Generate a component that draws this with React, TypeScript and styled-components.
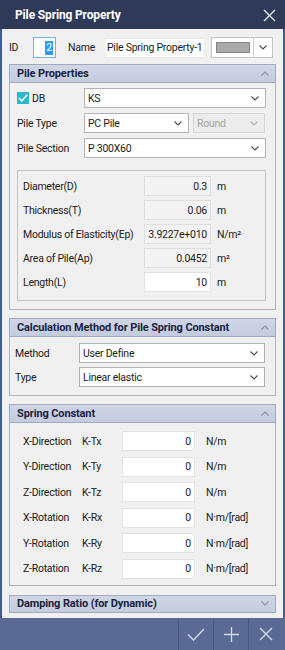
import styled, { createGlobalStyle } from "styled-components";

const GlobalStyle = createGlobalStyle`
  html, body {
    margin: 0;
    padding: 0;
    background: #ffffff;
  }
  body {
    font-family: Roboto, "Liberation Sans", sans-serif;
    font-size: 10.5px;
    letter-spacing: -0.25px;
    color: #1b1b1b;
  }
  * {
    box-sizing: border-box;
  }
`;

const Window = styled.div`
  width: 285px;
  height: 650px;
  display: flex;
  flex-direction: column;
  background: #f0f0f0;
`;

const TitleBar = styled.div`
  height: 29px;
  flex-shrink: 0;
  display: flex;
  align-items: center;
  justify-content: space-between;
  padding: 1px 9px 0 15px;
  background: #2e3a58;
  color: #ffffff;
  font-weight: 700;
  font-size: 12px;
  letter-spacing: -0.15px;
`;

const Body = styled.div`
  flex: 1;
  display: flex;
  flex-direction: column;
  padding: 8px 7px 0;
  border-left: 2px solid #3c5a9c;
  border-right: 2px solid #3c5a9c;
`;

const TopRow = styled.div`
  height: 21px;
  display: flex;
  align-items: center;
  margin-bottom: 6px;
`;

const TopLabel = styled.span<{ $w: number }>`
  width: ${(p) => p.$w}px;
  flex-shrink: 0;
`;

const IdBox = styled.div`
  width: 23px;
  height: 21px;
  margin-right: 12px;
  border: 1px solid #7ab0e6;
  background: #ffffff;
  display: flex;
  align-items: center;
  justify-content: flex-end;
  padding-right: 2px;
`;

const Selected = styled.span`
  background: #3399ff;
  color: #ffffff;
  padding: 0 1px;
  line-height: 14px;
`;

const NameBox = styled.div`
  width: 101px;
  height: 20px;
  border: 1px solid #ebebeb;
  background: #ffffff;
  display: flex;
  align-items: center;
  padding-left: 2px;
  white-space: nowrap;
  overflow: hidden;
`;

const ColorCombo = styled.div`
  width: 62px;
  height: 21px;
  margin-left: 6px;
  border: 1px solid #c4c4c4;
  background: #ffffff;
  display: flex;
  align-items: center;
`;

const Swatch = styled.div`
  width: 34px;
  height: 11px;
  margin-left: 4px;
  background: #a9a9a9;
  border: 1px solid #858585;
`;

const ComboArrow = styled.div`
  margin-left: auto;
  width: 19px;
  height: 100%;
  border-left: 1px solid #d2d2d2;
  display: flex;
  align-items: center;
  justify-content: center;
`;

const Panel = styled.div<{ $gap: number }>`
  margin-bottom: ${(p) => p.$gap}px;
`;

const PanelHeader = styled.div<{ $h?: number }>`
  height: ${(p) => p.$h ?? 19}px;
  display: flex;
  align-items: center;
  justify-content: space-between;
  padding: 0 6px 0 7px;
  border: 1px solid #a2aac0;
  background: linear-gradient(#d0d6e6, #c4cbde);
  color: #17233f;
  font-weight: 700;
  font-size: 11px;
  letter-spacing: -0.12px;
`;

const PanelBody = styled.div<{ $pad: string }>`
  border: 1px solid #b4b4b4;
  border-top: none;
  padding: ${(p) => p.$pad};
  display: flex;
  flex-direction: column;
`;

const FormRow = styled.div<{ $gap?: number }>`
  height: 20px;
  display: flex;
  align-items: center;
  margin-bottom: ${(p) => p.$gap ?? 5}px;
  &:last-child {
    margin-bottom: 0;
  }
`;

const RowLabel = styled.span<{ $w: number }>`
  width: ${(p) => p.$w}px;
  flex-shrink: 0;
  display: flex;
  align-items: center;
  white-space: nowrap;
`;

const Select = styled.div<{ $w?: number; $disabled?: boolean }>`
  ${(p) => (p.$w ? `width: ${p.$w}px;` : "flex: 1;")}
  height: 20px;
  display: flex;
  align-items: center;
  justify-content: space-between;
  padding: 0 6px 0 3px;
  border: 1px solid ${(p) => (p.$disabled ? "#d6d6d6" : "#b3b3b3")};
  background: ${(p) => (p.$disabled ? "#ececec" : "#ffffff")};
  color: ${(p) => (p.$disabled ? "#a3a3a3" : "#1b1b1b")};
`;

const Check = styled.span`
  width: 12px;
  height: 12px;
  margin-right: 3px;
  background: #2bb8cf;
  display: flex;
  align-items: center;
  justify-content: center;
`;

const Group = styled.div`
  margin-top: 7px;
  border: 1px solid #c3c3c3;
  padding: 5px 0 8px 5px;
  display: flex;
  flex-direction: column;
`;

const ValueBox = styled.div<{ $w: number; $editable?: boolean }>`
  width: ${(p) => p.$w}px;
  height: 20px;
  flex-shrink: 0;
  display: flex;
  align-items: center;
  justify-content: flex-end;
  padding-right: 3px;
  border: 1px solid ${(p) => (p.$editable ? "#e2e2e2" : "#dedede")};
  background: ${(p) => (p.$editable ? "#ffffff" : "#f3f3f3")};
`;

const Unit = styled.span<{ $gap: number }>`
  margin-left: ${(p) => p.$gap}px;
  white-space: nowrap;
`;

const Spacer = styled.div`
  flex: 1;
`;

const Footer = styled.div`
  height: 32px;
  flex-shrink: 0;
  display: flex;
  justify-content: flex-end;
  padding-right: 2px;
  background: #5a6a95;
`;

const FooterButton = styled.div`
  width: 35px;
  height: 100%;
  display: flex;
  align-items: center;
  justify-content: center;
  border-left: 1px solid #4b5a82;
`;

const Chevron = ({ up, color = "#4a4a4a" }: { up?: boolean; color?: string }) => (
  <svg width="8" height="5" viewBox="0 0 8 5">
    <path
      d={up ? "M0.5 4.5 L4 1 L7.5 4.5" : "M0.5 0.5 L4 4 L7.5 0.5"}
      fill="none"
      stroke={color}
      strokeWidth="1.1"
    />
  </svg>
);

const groupRows = [
  { label: "Diameter(D)", value: "0.3", unit: "m" },
  { label: "Thickness(T)", value: "0.06", unit: "m" },
  { label: "Modulus of Elasticity(Ep)", value: "3.9227e+010", unit: "N/m²" },
  { label: "Area of Pile(Ap)", value: "0.0452", unit: "m²" },
  { label: "Length(L)", value: "10", unit: "m", editable: true },
];

const springRows = [
  { label: "X-Direction", k: "K-Tx", unit: "N/m" },
  { label: "Y-Direction", k: "K-Ty", unit: "N/m" },
  { label: "Z-Direction", k: "K-Tz", unit: "N/m" },
  { label: "X-Rotation", k: "K-Rx", unit: "N·m/[rad]" },
  { label: "Y-Rotation", k: "K-Ry", unit: "N·m/[rad]" },
  { label: "Z-Rotation", k: "K-Rz", unit: "N·m/[rad]" },
];

function App() {
  return (
    <>
      <GlobalStyle />
      <Window>
        <TitleBar>
          <span>Pile Spring Property</span>
          <svg width="13" height="13" viewBox="0 0 13 13">
            <path d="M1 1 L12 12 M12 1 L1 12" stroke="#e8ecf4" strokeWidth="1.4" />
          </svg>
        </TitleBar>
        <Body>
          <TopRow>
            <TopLabel $w={24}>ID</TopLabel>
            <IdBox>
              <Selected>2</Selected>
            </IdBox>
            <TopLabel $w={36}>Name</TopLabel>
            <NameBox>Pile Spring Property-1</NameBox>
            <ColorCombo>
              <Swatch />
              <ComboArrow>
                <Chevron />
              </ComboArrow>
            </ColorCombo>
          </TopRow>

          <Panel $gap={8}>
            <PanelHeader>
              <span>Pile Properties</span>
              <Chevron up color="#8a92a6" />
            </PanelHeader>
            <PanelBody $pad="5px 9px 8px 7px">
              <FormRow>
                <RowLabel $w={67}>
                  <Check>
                    <svg width="10" height="8" viewBox="0 0 10 8">
                      <path d="M1 4 L3.8 6.8 L9 1" fill="none" stroke="#ffffff" strokeWidth="1.5" />
                    </svg>
                  </Check>
                  DB
                </RowLabel>
                <Select>
                  <span>KS</span>
                  <Chevron />
                </Select>
              </FormRow>
              <FormRow>
                <RowLabel $w={67}>Pile Type</RowLabel>
                <Select $w={105}>
                  <span>PC Pile</span>
                  <Chevron />
                </Select>
                <Select $w={72} $disabled style={{ marginLeft: 4 }}>
                  <span>Round</span>
                  <Chevron color="#b0b0b0" />
                </Select>
              </FormRow>
              <FormRow>
                <RowLabel $w={67}>Pile Section</RowLabel>
                <Select>
                  <span>P 300X60</span>
                  <Chevron />
                </Select>
              </FormRow>
              <Group>
                {groupRows.map((r) => (
                  <FormRow key={r.label} $gap={4}>
                    <RowLabel $w={121}>{r.label}</RowLabel>
                    <ValueBox $w={67} $editable={r.editable}>
                      {r.value}
                    </ValueBox>
                    <Unit $gap={6}>{r.unit}</Unit>
                  </FormRow>
                ))}
              </Group>
            </PanelBody>
          </Panel>

          <Panel $gap={8}>
            <PanelHeader>
              <span>Calculation Method for Pile Spring Constant</span>
              <Chevron up color="#8a92a6" />
            </PanelHeader>
            <PanelBody $pad="6px 10px 8px 5px">
              <FormRow $gap={4}>
                <RowLabel $w={64}>Method</RowLabel>
                <Select>
                  <span>User Define</span>
                  <Chevron />
                </Select>
              </FormRow>
              <FormRow $gap={4}>
                <RowLabel $w={64}>Type</RowLabel>
                <Select>
                  <span>Linear elastic</span>
                  <Chevron />
                </Select>
              </FormRow>
            </PanelBody>
          </Panel>

          <Panel $gap={9}>
            <PanelHeader>
              <span>Spring Constant</span>
              <Chevron up color="#8a92a6" />
            </PanelHeader>
            <PanelBody $pad="8px 10px 6px 13px">
              {springRows.map((r) => (
                <FormRow key={r.k} $gap={5.6}>
                  <RowLabel $w={59}>{r.label}</RowLabel>
                  <RowLabel $w={40}>{r.k}</RowLabel>
                  <ValueBox $w={73} $editable>
                    0
                  </ValueBox>
                  <Unit $gap={11}>{r.unit}</Unit>
                </FormRow>
              ))}
            </PanelBody>
          </Panel>

          <PanelHeader $h={18}>
            <span>Damping Ratio (for Dynamic)</span>
            <Chevron color="#8a92a6" />
          </PanelHeader>
          <Spacer />
        </Body>
        <Footer>
          <FooterButton>
            <svg width="18" height="13" viewBox="0 0 18 13">
              <path d="M1 6.5 L6.5 12 L17 1" fill="none" stroke="#d4dbe9" strokeWidth="1.3" />
            </svg>
          </FooterButton>
          <FooterButton>
            <svg width="15" height="15" viewBox="0 0 15 15">
              <path d="M7.5 0 V15 M0 7.5 H15" stroke="#d4dbe9" strokeWidth="1.3" />
            </svg>
          </FooterButton>
          <FooterButton>
            <svg width="14" height="14" viewBox="0 0 14 14">
              <path d="M1 1 L13 13 M13 1 L1 13" stroke="#d4dbe9" strokeWidth="1.3" />
            </svg>
          </FooterButton>
        </Footer>
      </Window>
    </>
  );
}

export default App;
